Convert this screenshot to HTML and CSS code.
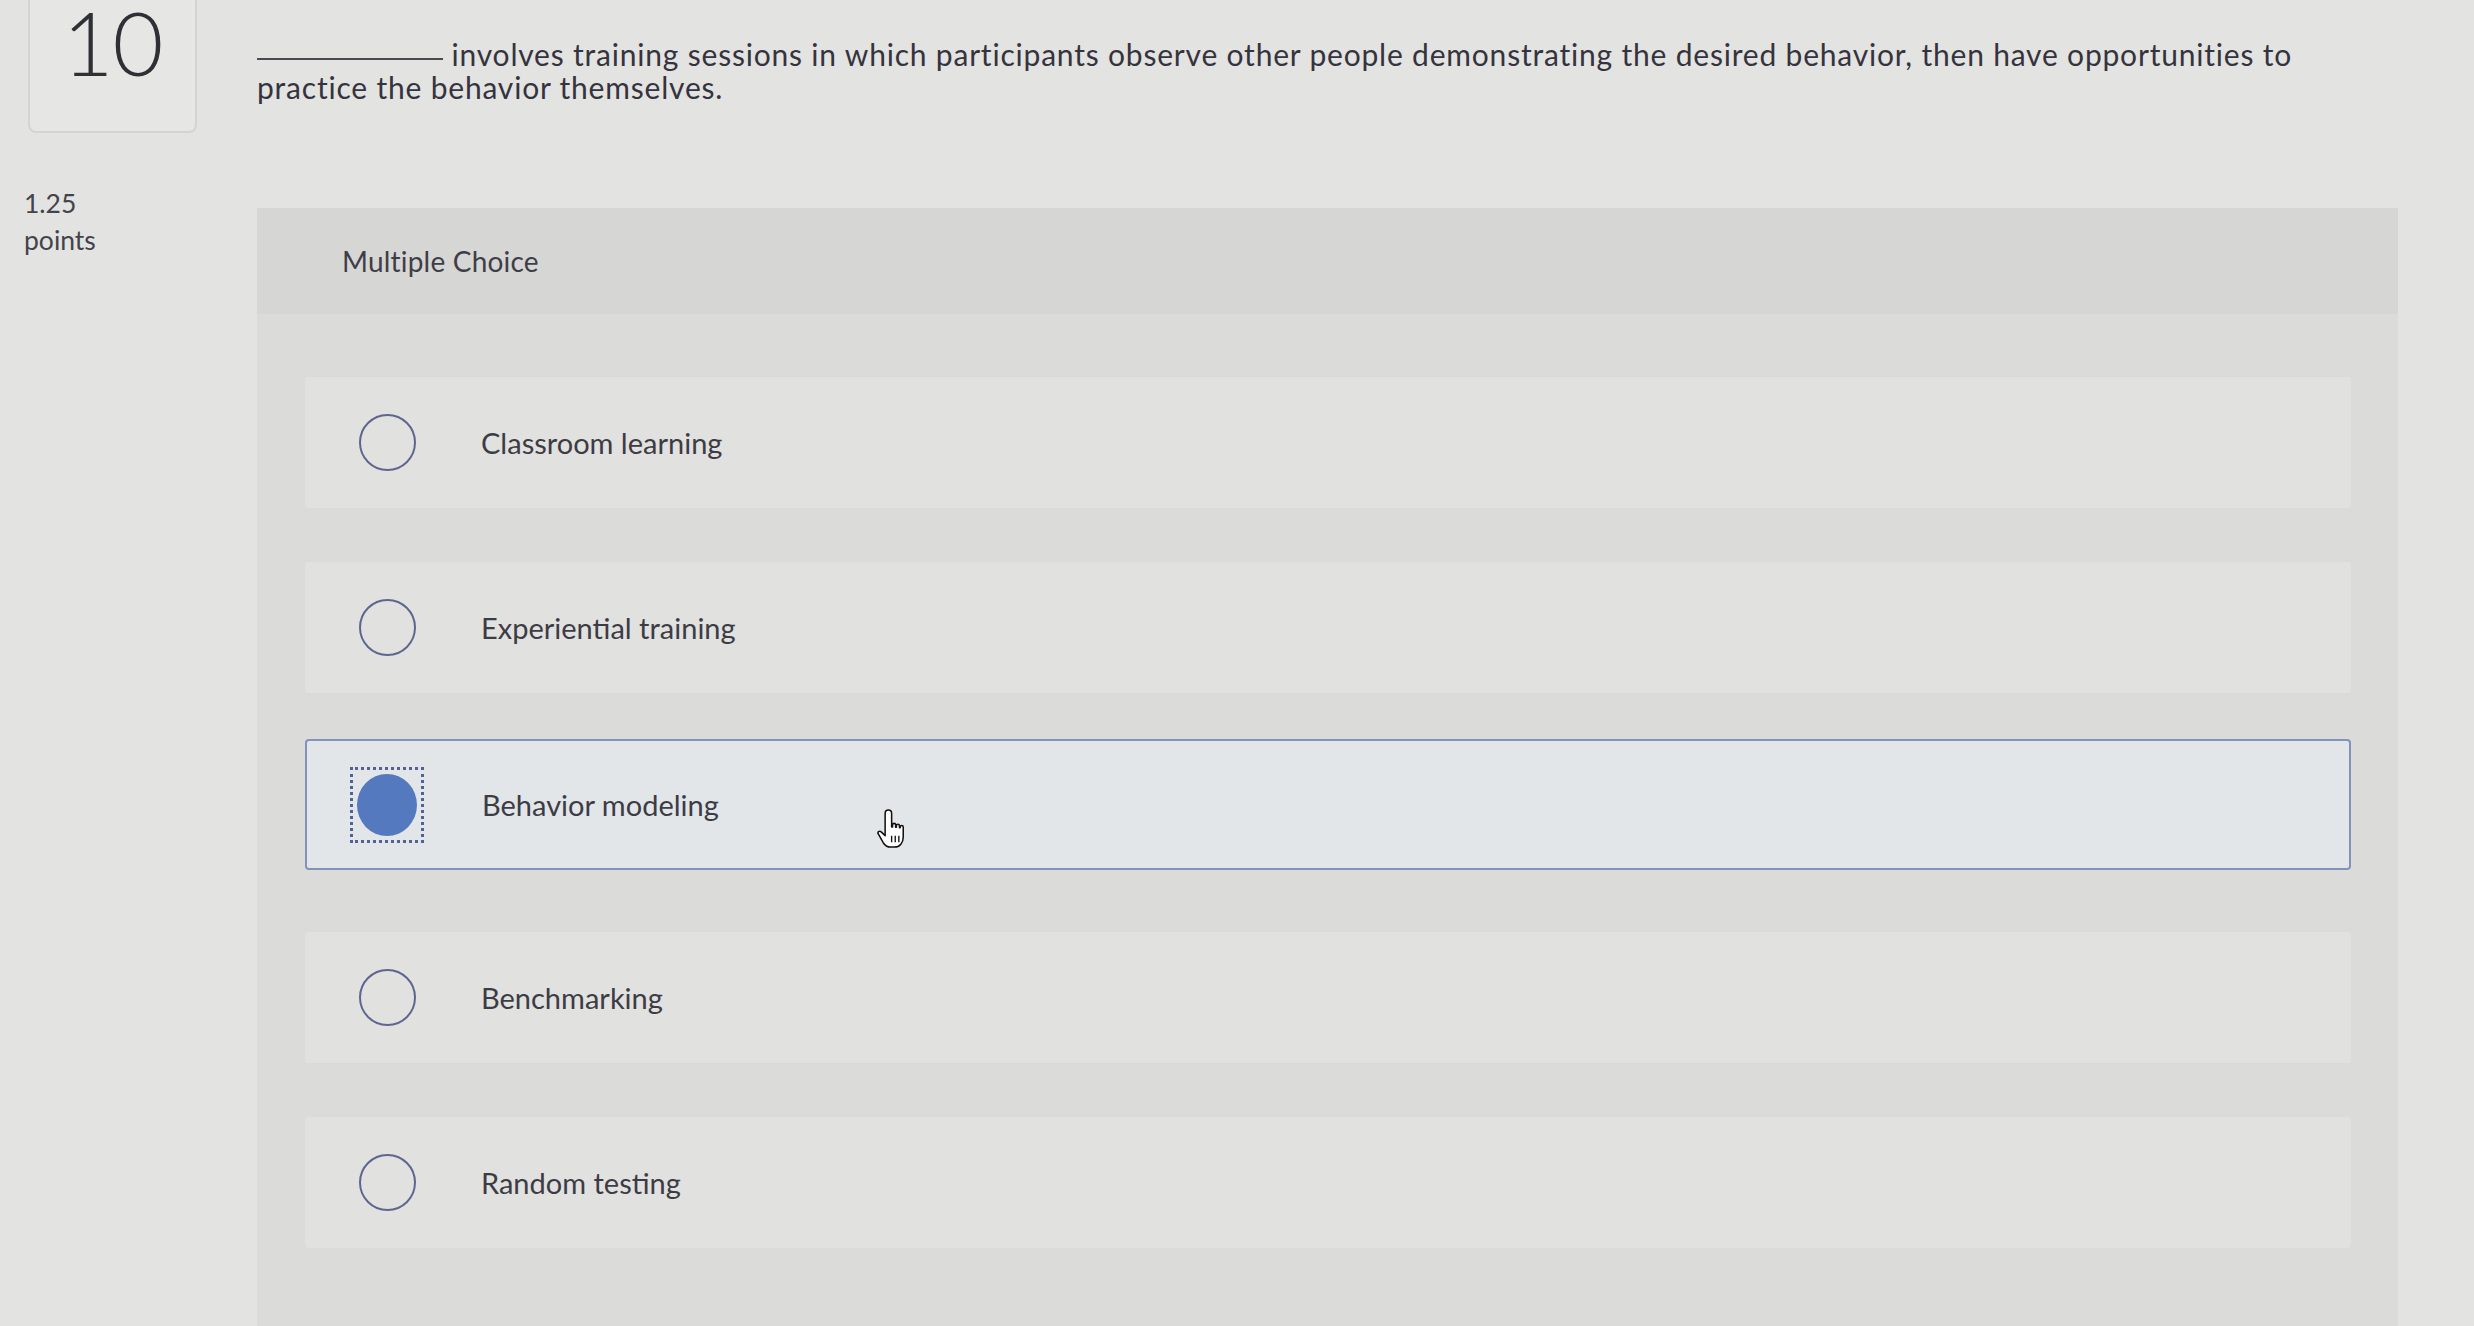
FILE: index.html
```html
<!DOCTYPE html>
<html lang="en">
<head>
<meta charset="utf-8">
<title>Question 10</title>
<link rel="stylesheet" href="styles.css">
</head>
<body>
<div class="page">
  <aside class="meta">
    <div class="qnum">10</div>
    <div class="points">
      <span class="pts-val">1.25</span>
      <span class="pts-label">points</span>
    </div>
  </aside>
  <main class="content">
    <p class="prompt"><span class="blank"></span> involves training sessions in which participants observe other people demonstrating the desired behavior, then have opportunities to<br>practice the behavior themselves.</p>
    <section class="panel">
      <header class="panel-head">Multiple Choice</header>
      <div class="options">
        <div class="option"><span class="radio"></span><span class="opt-text">Classroom learning</span></div>
        <div class="option"><span class="radio"></span><span class="opt-text">Experiential training</span></div>
        <div class="option selected"><span class="focus"><span class="radio filled"></span></span><span class="opt-text">Behavior modeling</span>
          <svg class="cursor" viewBox="3 1 15 21" width="30" height="40" aria-hidden="true">
            <path d="M8.6 1.5c1 0 1.7.8 1.7 1.8v7.2h.5V9.3c0-1 1.6-1 1.6 0v1.3h.4v-.9c0-1 1.6-1 1.6 0v1.2h.4v-.5c0-1 1.6-1 1.6 0v5.3c0 3-1.8 5.3-4.6 5.3H9.6c-1.7 0-2.8-.9-3.7-2.3L3.3 14.1c-.6-.9.6-1.9 1.5-1.1L6.9 15V3.3c0-1 .7-1.8 1.7-1.8z" fill="#fff" stroke="#111" stroke-width="0.8" stroke-linejoin="round"/>
            <path d="M10.3 15v3.5M12.2 15v3.5M14.1 15v3.5" stroke="#111" stroke-width="0.7"/>
          </svg>
        </div>
        <div class="option"><span class="radio"></span><span class="opt-text">Benchmarking</span></div>
        <div class="option"><span class="radio"></span><span class="opt-text">Random testing</span></div>
      </div>
    </section>
  </main>
</div>
</body>
</html>
```

FILE: styles.css
```css
html, body {
  margin: 0;
  padding: 0;
}
body {
  background: #e3e3e1;
  font-family: Lato, "Liberation Sans", sans-serif;
  color: #3b3a44;
  height: 1326px;
  overflow: hidden;
}
.page {
  display: grid;
  grid-template-columns: 257px 1fr;
  height: 1326px;
}
.meta {
  display: flex;
  flex-direction: column;
}
.qnum {
  margin-left: 28px;
  width: 169px;
  height: 133px;
  box-sizing: border-box;
  border: 2px solid #d4d4d2;
  border-top: none;
  border-radius: 0 0 8px 8px;
  background: #e6e6e4;
  padding-top: 2px;
  font-size: 88px;
  font-weight: 300;
  line-height: 80px;
  text-align: center;
  color: #2f2f36;
  letter-spacing: -1px;
}
.points {
  margin-top: 52px;
  margin-left: 24px;
  display: flex;
  flex-direction: column;
  font-size: 26.5px;
  line-height: 37px;
  color: #44434c;
}
.content {
  display: flex;
  flex-direction: column;
  padding-right: 76px;
}
.prompt {
  margin: 0;
  padding-top: 38px;
  font-size: 30px;
  letter-spacing: 0.8px;
  line-height: 33px;
  color: #35343e;
}
.blank {
  display: inline-block;
  width: 186px;
  border-bottom: 2px solid #4a4a52;
  vertical-align: 6px;
}
.panel {
  margin-top: 104px;
  flex: 1;
  background: #dbdbd9;
  display: flex;
  flex-direction: column;
}
.panel-head {
  height: 106px;
  display: flex;
  align-items: center;
  padding-left: 85px;
  background: #d6d6d5;
  font-size: 28px;
  letter-spacing: 0.2px;
  color: #3f3e47;
}
.options {
  display: flex;
  flex-direction: column;
  gap: 54px;
  padding: 63px 47px 0 48px;
}
.option {
  position: relative;
  height: 131px;
  box-sizing: border-box;
  display: flex;
  align-items: center;
  padding-left: 54px;
  gap: 65px;
  background: #e1e1df;
  border-radius: 4px;
  font-size: 29px;
  color: #3d3c45;
}
.radio {
  width: 57px;
  height: 57px;
  box-sizing: border-box;
  border: 2.5px solid #5e668f;
  border-radius: 50%;
  flex: none;
}
.option.selected {
  margin-top: -8px;
  margin-bottom: 8px;
  background: #e2e6e9;
  border: 2px solid #8393bb;
  padding-left: 47px;
}
.focus {
  display: flex;
  padding: 3px;
  outline: 3px dotted #52619a;
  outline-offset: 1px;
  flex: none;
}
.radio.filled {
  width: 60px;
  height: 62px;
  border: none;
  background: #5579bf;
}
.selected .opt-text {
  margin-left: -3px;
}
.cursor {
  position: absolute;
  left: 570px;
  top: 68px;
}
```
